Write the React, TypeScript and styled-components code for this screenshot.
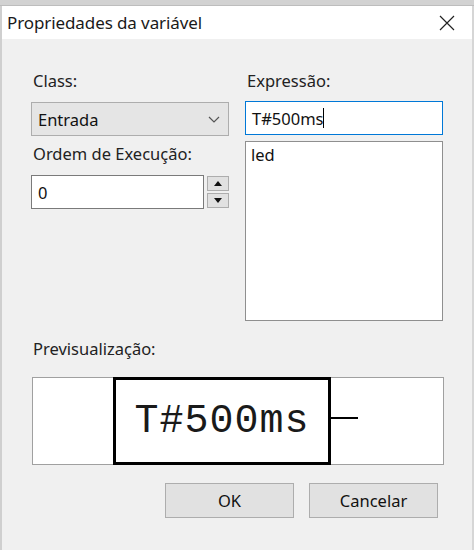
import styled, { createGlobalStyle } from "styled-components"

const GlobalStyle = createGlobalStyle`
	html, body {
		margin: 0;
		padding: 0;
		background: #ffffff;
		font-family: "Noto Sans", "Segoe UI", sans-serif;
	}
	* { box-sizing: border-box; }
`

/*******************************************************/

const Screen = styled.div`
	width: 474px;
	height: 555px;
	display: flex;
	flex-direction: column;
	background: #ffffff;
	overflow: hidden;
`

const BehindStrip = styled.div`
	height: 6px;
	background: #d2d2d2;
	border-bottom: 1px solid #bdbdbd;
`

const Window = styled.div`
	display: flex;
	flex-direction: column;
	height: 544px;
	border-left: 2px solid #cfcfcf;
	border-right: 2px solid #d6d6d6;
`

const TitleBar = styled.div`
	height: 33px;
	display: flex;
	align-items: center;
	justify-content: space-between;
	padding: 0 17px 0 5px;
	background: #ffffff;
`

const Title = styled.span`
	font-size: 17px;
	color: #1a1a1a;
	letter-spacing: -0.1px;
`

const Body = styled.div`
	flex: 1;
	background: #f0f0f0;
	padding: 32px 27px 0 29px;
	display: flex;
	flex-direction: column;
`

const Columns = styled.div`
	display: grid;
	grid-template-columns: 198px 198px;
	column-gap: 16px;
`

const Column = styled.div`
	display: flex;
	flex-direction: column;
`

const Label = styled.div<{ $top?: number }>`
	height: 20px;
	line-height: 20px;
	font-size: 16.5px;
	color: #222;
	margin-top: ${(p) => p.$top ?? 0}px;
	margin-left: 2px;
`

const Select = styled.div`
	margin-top: 11px;
	height: 34px;
	display: flex;
	align-items: center;
	justify-content: space-between;
	padding: 0 8px 0 6px;
	background: #e5e5e5;
	border: 1px solid #adadad;
	font-size: 16.5px;
	color: #111;
`

const SpinRow = styled.div`
	margin-top: 11px;
	display: flex;
	gap: 3px;
`

const TextBox = styled.div<{ $focus?: boolean; $width?: number }>`
	height: 34px;
	width: ${(p) => (p.$width ? `${p.$width}px` : "100%")};
	display: flex;
	align-items: center;
	padding-left: 6px;
	background: #ffffff;
	border: 1px solid ${(p) => (p.$focus ? "#0078d7" : "#7a7a7a")};
	font-size: 16.5px;
	color: #111;
`

const Caret = styled.span`
	display: inline-block;
	width: 1px;
	height: 20px;
	background: #000;
`

const Spinner = styled.div`
	display: flex;
	flex-direction: column;
	gap: 2px;
	padding-top: 1px;
`

const SpinButton = styled.div`
	width: 22px;
	height: 15px;
	display: flex;
	align-items: center;
	justify-content: center;
	background: #e1e1e1;
	border: 1px solid #adadad;
`

const ListBox = styled.div`
	margin-top: 6px;
	height: 180px;
	background: #ffffff;
	border: 1px solid #8f8f8f;
	padding: 2px 5px;
	font-size: 16.5px;
	line-height: 21px;
	color: #111;
`

const Preview = styled.div`
	margin-top: 18px;
	margin-left: 1px;
	width: 412px;
	height: 88px;
	display: flex;
	align-items: stretch;
	padding-left: 80px;
	background: #ffffff;
	border: 1px solid #a0a0a0;
`

const Block = styled.div`
	width: 218px;
	margin: -1px 0;
	display: flex;
	align-items: center;
	justify-content: center;
	border: 3px solid #000;
	font-family: "Liberation Mono", "Courier New", monospace;
	font-size: 40px;
	letter-spacing: 1px;
	color: #1a1a1a;
`

const Stub = styled.div`
	width: 27px;
	height: 2px;
	margin-top: 39px;
	background: #000;
`

const Buttons = styled.div`
	margin-top: 18px;
	display: flex;
	justify-content: flex-end;
	gap: 15px;
	padding-right: 7px;
`

const Button = styled.div`
	width: 129px;
	height: 35px;
	display: flex;
	align-items: center;
	justify-content: center;
	background: #e1e1e1;
	border: 1px solid #adadad;
	font-size: 16.5px;
	color: #111;
`

/*******************************************************/

const Chevron = () => (
	<svg width="12" height="7" viewBox="0 0 12 7">
		<polyline points="1,1 6,6 11,1" fill="none" stroke="#555" strokeWidth="1.2" />
	</svg>
)

const Triangle = ({ up }: { up?: boolean }) => (
	<svg width="8" height="5" viewBox="0 0 8 5">
		<polygon points={up ? "0,5 8,5 4,0" : "0,0 8,0 4,5"} fill="#111" />
	</svg>
)

const CloseIcon = () => (
	<svg width="16" height="16" viewBox="0 0 16 16">
		<path d="M1 1 L15 15 M15 1 L1 15" stroke="#222" strokeWidth="1.2" />
	</svg>
)

export default function App() {
	return (
		<>
			<GlobalStyle />
			<Screen>
				<BehindStrip />
				<Window>
					<TitleBar>
						<Title>Propriedades da variável</Title>
						<CloseIcon />
					</TitleBar>
					<Body>
						<Columns>
							<Column>
								<Label>Class:</Label>
								<Select>
									Entrada
									<Chevron />
								</Select>
								<Label $top={8}>Ordem de Execução:</Label>
								<SpinRow>
									<TextBox $width={173}>0</TextBox>
									<Spinner>
										<SpinButton>
											<Triangle up />
										</SpinButton>
										<SpinButton>
											<Triangle />
										</SpinButton>
									</Spinner>
								</SpinRow>
							</Column>
							<Column>
								<Label>Expressão:</Label>
								<TextBox $focus style={{ marginTop: 10 }}>
									T#500ms
									<Caret />
								</TextBox>
								<ListBox>led</ListBox>
							</Column>
						</Columns>
						<Label $top={18}>Previsualização:</Label>
						<Preview>
							<Block>T#500ms</Block>
							<Stub />
						</Preview>
						<Buttons>
							<Button>OK</Button>
							<Button>Cancelar</Button>
						</Buttons>
					</Body>
				</Window>
			</Screen>
		</>
	)
}
